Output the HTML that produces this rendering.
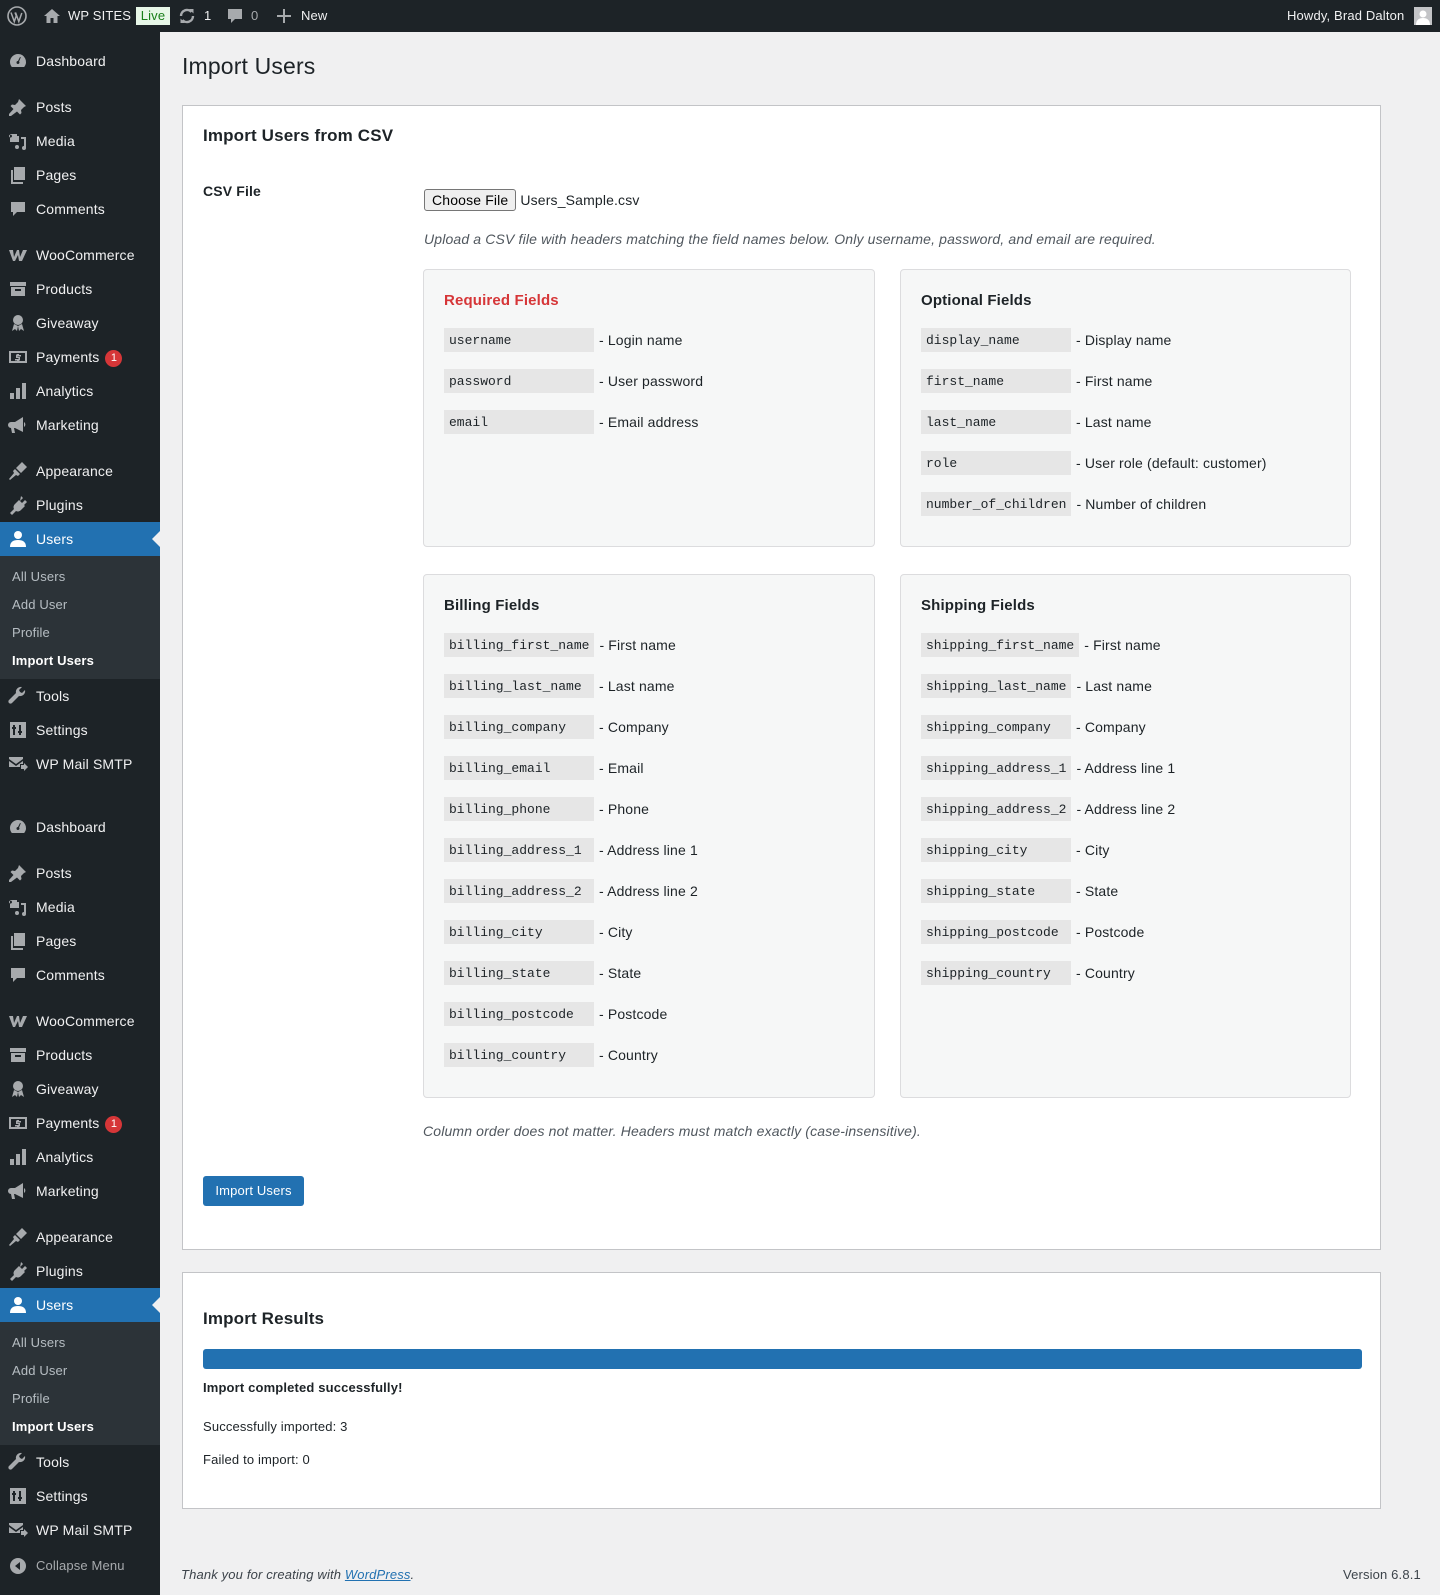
<!DOCTYPE html>
<html><head><meta charset="utf-8">
<style>
*{box-sizing:border-box;margin:0;padding:0}
body{width:1440px;height:1595px;background:#f0f0f1;font-family:"Liberation Sans",sans-serif;color:#1d2327;position:relative;overflow:hidden;font-size:14px;letter-spacing:.15px}
.ab{position:absolute;left:0;top:0;width:1440px;height:32px;background:#1d2327;color:#f0f0f1;font-size:13px}
.ab span,.ab svg{position:absolute}
.side{position:absolute;left:0;top:32px;width:160px;height:1563px;background:#1d2327}
.m{position:absolute;left:0;width:160px;height:34px;color:#f0f0f1;font-size:14px;line-height:34px;padding-left:36px}
.m svg{position:absolute;left:8px;top:7px;width:20px;height:20px;fill:#a7aaad}
.m.cur{background:#2271b1;color:#fff}
.m.cur svg{fill:#fff}
.m.cur:after{content:"";position:absolute;right:0;top:9px;border:8px solid transparent;border-right-color:#f0f0f1}
.sub{position:absolute;left:0;width:160px;height:123px;background:#2c3338;padding-top:7px}
.sub div{height:28px;line-height:28px;padding-left:12px;font-size:13px;color:rgba(240,246,252,.7)}
.sub div.b{color:#fff;font-weight:bold}
.badge{display:inline-block;width:17px;height:17px;border-radius:9px;background:#d63638;color:#fff;font-size:11px;line-height:17px;text-align:center;vertical-align:1px;margin-left:6px;letter-spacing:0}
.box{position:absolute;left:182px;width:1199px;background:#fff;border:1px solid #c3c4c7}
.panel{position:absolute;background:#f6f7f7;border:1px solid #dcdcde;border-radius:4px;padding:20px 20px}
.panel h3{font-size:15px;font-weight:bold;height:22px;line-height:22px;margin-top:0px;margin-bottom:16px;color:#1d2327}
.row{height:24px;margin-bottom:17px;line-height:24px;font-size:14px;color:#1d2327;white-space:nowrap}
.row code{display:inline-block;min-width:150px;height:24px;line-height:25px;padding:0 5px;background:#e6e6e6;font-family:"Liberation Mono",monospace;font-size:13px;color:#1d2327;vertical-align:top;margin-right:5px;letter-spacing:0}
.abs{position:absolute;white-space:nowrap}
</style></head><body>
<div class="ab">
<svg style="left:7px;top:6px" width="20" height="20" viewBox="0 0 20 20"><circle cx="10" cy="10" r="9" fill="none" stroke="#a7aaad" stroke-width="1.6"/><path d="M4 6.5l3.3 9 2-5.7-1.3-3.3M8.5 6.5l3.3 9 3-8.5" fill="none" stroke="#a7aaad" stroke-width="1.5"/></svg>
<svg style="left:43px;top:7px" width="18" height="18" viewBox="0 0 18 18"><path d="M9 2L1 9h2.5v7h4v-5h3v5h4V9H17z" fill="#a7aaad"/></svg>
<span style="left:68px;top:8px">WP SITES</span>
<span style="left:136px;top:7px;width:34px;height:18px;background:#e7f6e7;color:#1a7f1a;font-size:13px;line-height:18px;text-align:center">Live</span>
<svg style="left:178px;top:7px" width="18" height="18" viewBox="0 0 18 18"><path d="M3 9a6 6 0 0 1 10.5-4M15 9a6 6 0 0 1-10.5 4" fill="none" stroke="#a7aaad" stroke-width="2.4"/><path d="M11 2h4.5v4.5zM7 16H2.5v-4.5z" fill="#a7aaad"/></svg>
<span style="left:204px;top:8px">1</span>
<svg style="left:227px;top:8px" width="16" height="16" viewBox="0 0 16 16"><path d="M1 1h14v10H8l-4 4v-4H1z" fill="#a7aaad"/></svg>
<span style="left:251px;top:8px;color:#a7aaad">0</span>
<svg style="left:277px;top:9px" width="14" height="14" viewBox="0 0 14 14"><path d="M6 0h2v14H6zM0 6h14v2H0z" fill="#a7aaad"/></svg>
<span style="left:301px;top:8px">New</span>
<span style="left:1287px;top:8px">Howdy, Brad Dalton</span>
<svg style="left:1414px;top:7px" width="18" height="18" viewBox="0 0 18 18"><rect width="18" height="18" fill="#c3c4c7"/><circle cx="9" cy="7" r="3.5" fill="#fff"/><path d="M2 18c0-5 3-7 7-7s7 2 7 7z" fill="#fff"/></svg>
</div>

<div class="side">
<div id="blk"></div>
</div>
<script>
(function(){
var I={
dash:'<path d="M10 3a8 8 0 0 0-8 8c0 2 .7 3.6 1.8 5h12.4A8 8 0 0 0 10 3zm0 10a1.5 1.5 0 1 1 0-3l2-4 .8.3-1.7 4.2A1.5 1.5 0 0 1 10 13z"/>',
posts:'<path d="M11 2l7 7-2 1-3 3 .5 3-1.5 1.5-3-3L3 19H1v-2l4.5-5-3-3L4 7.5 7 8l3-3z"/>',
media:'<path d="M2 3h7v2h2v6H2zM4 5a1.5 1.5 0 1 0 0 .1zM13 6h5v11a2 2 0 1 1-2-2V8h-3z"/><circle cx="9" cy="16" r="2"/>',
pages:'<path d="M6 2h11v13H6zM3 5h2v12h10v2H3z"/>',
comm:'<path d="M3 3h14v10H9l-4 4v-4H3z"/>',
woo:'<path d="M1 5h4l1 7 3-7h2l1 7 3-7h4l-5 11h-3l-1-6-3 6H5z"/>',
prod:'<path d="M2 3h16v4H2zM3 8h14v9H3zm4 2v2h6v-2z"/>',
give:'<circle cx="10" cy="7" r="5"/><path d="M6 11l-2 7 3-2 2 2 1-5zM14 11l2 7-3-2-2 2-1-5z"/>',
pay:'<path d="M1 4h18v12H1zm2 2v8h14V6zm6 1h2v1h2v1.5H9.5v.5H12v3.5h-1v1H9v-1H7v-1.5h3.5V11H8V7.5h1z"/>',
anal:'<path d="M2 12h4v6H2zM8 7h4v11H8zM14 2h4v16h-4z"/>',
mark:'<path d="M3 7h4l8-5v15l-8-4H6l1 5H4l-1-5a3 3 0 0 1 0-6zM16 7a3 3 0 0 1 0 5z"/>',
app:'<path d="M14 1l5 5-6 6-5-5zM7 8l5 5-2 2-2-1-6 5-1-1 5-6-1-2z"/>',
plug:'<path d="M13 1l2 2-3 3 2 2 3-3 2 2-3 3 1 1-4 4a4 4 0 0 1-5 1l-4 4-2-2 4-4a4 4 0 0 1 1-5l4-4 1 1z"/>',
user:'<circle cx="10" cy="6" r="4"/><path d="M2 18c0-5 3-7 8-7s8 2 8 7z"/>',
tools:'<path d="M17 4l-3 3-2-1-1-2 3-3a5 5 0 0 0-6 6L1 14a2 2 0 0 0 3 3l7-7a5 5 0 0 0 6-6z"/>',
set:'<path d="M2 2h16v16H2zm3 3v2H4v2h1v6h2V9h1V7H7V5zm6 0v6h-1v2h1v2h2v-2h1v-2h-1V5z"/>',
mail:'<path d="M1 3h14v2l-7 5-7-5zM1 7l7 5 7-5v3h-3v3H1zM13 11h3v-2l4 4-4 4v-2h-3z"/>'
};
function m(top,ic,txt,cls,extra){return '<div class="m '+(cls||'')+'" style="top:'+top+'px"><svg viewBox="0 0 20 20">'+I[ic]+'</svg>'+txt+(extra||'')+'</div>';}
var h='';
function block(o){
 var y=o+12;
 h+=m(y,'dash','Dashboard');y+=34+12;
 [['posts','Posts'],['media','Media'],['pages','Pages'],['comm','Comments']].forEach(function(a){h+=m(y,a[0],a[1]);y+=34});
 y+=12;
 [['woo','WooCommerce'],['prod','Products'],['give','Giveaway'],['pay','Payments','<span class="badge">1</span>'],['anal','Analytics'],['mark','Marketing']].forEach(function(a){h+=m(y,a[0],a[1],'',a[2]);y+=34});
 y+=12;
 h+=m(y,'app','Appearance');y+=34;h+=m(y,'plug','Plugins');y+=34;
 h+=m(y,'user','Users','cur');y+=34;
 h+='<div class="sub" style="top:'+y+'px"><div>All Users</div><div>Add User</div><div>Profile</div><div class="b">Import Users</div></div>';y+=123;
 h+=m(y,'tools','Tools');y+=34;h+=m(y,'set','Settings');y+=34;h+=m(y,'mail','WP Mail SMTP');y+=34;
 return y;
}
var e=block(0);
e=block(766);
h+='<div class="m" style="top:'+(e+2)+'px;color:#a7aaad;font-size:13px"><svg viewBox="0 0 20 20"><circle cx="10" cy="10" r="8"/><path d="M12 6v8l-5-4z" fill="#1d2327"/></svg>Collapse Menu</div>';
document.getElementById('blk').outerHTML=h;
})();
</script>

<div class="abs" style="left:182px;top:52px;font-size:23px;line-height:29px;color:#1d2327">Import Users</div>

<div class="box" style="top:105px;height:1145px">
<div class="abs" style="left:20px;top:19px;font-size:17px;font-weight:bold;line-height:22px">Import Users from CSV</div>
<div class="abs" style="left:20px;top:76px;font-size:14px;font-weight:bold;line-height:18px">CSV File</div>
<div class="abs" style="left:241px;top:83px;height:22px;line-height:20px;font-size:14px"><span style="display:inline-block;border:1px solid #767676;border-radius:3px;background:#efefef;padding:0 7px;height:22px;line-height:20px;color:#000">Choose File</span> Users_Sample.csv</div>
<div class="abs" style="left:241px;top:123px;font-size:14px;font-style:italic;color:#50575e;line-height:20px">Upload a CSV file with headers matching the field names below. Only username, password, and email are required.</div>
</div>

<div class="panel" style="left:423px;top:269px;width:452px;height:278px">
<h3 style="color:#d63638">Required Fields</h3>
<div class="row"><code>username</code>- Login name</div>
<div class="row"><code>password</code>- User password</div>
<div class="row"><code>email</code>- Email address</div>
</div>
<div class="panel" style="left:900px;top:269px;width:451px;height:278px">
<h3>Optional Fields</h3>
<div class="row"><code>display_name</code>- Display name</div>
<div class="row"><code>first_name</code>- First name</div>
<div class="row"><code>last_name</code>- Last name</div>
<div class="row"><code>role</code>- User role (default: customer)</div>
<div class="row"><code>number_of_children</code>- Number of children</div>
</div>
<div class="panel" style="left:423px;top:574px;width:452px;height:524px">
<h3>Billing Fields</h3>
<div class="row"><code>billing_first_name</code>- First name</div>
<div class="row"><code>billing_last_name</code>- Last name</div>
<div class="row"><code>billing_company</code>- Company</div>
<div class="row"><code>billing_email</code>- Email</div>
<div class="row"><code>billing_phone</code>- Phone</div>
<div class="row"><code>billing_address_1</code>- Address line 1</div>
<div class="row"><code>billing_address_2</code>- Address line 2</div>
<div class="row"><code>billing_city</code>- City</div>
<div class="row"><code>billing_state</code>- State</div>
<div class="row"><code>billing_postcode</code>- Postcode</div>
<div class="row"><code>billing_country</code>- Country</div>
</div>
<div class="panel" style="left:900px;top:574px;width:451px;height:524px">
<h3>Shipping Fields</h3>
<div class="row"><code>shipping_first_name</code>- First name</div>
<div class="row"><code>shipping_last_name</code>- Last name</div>
<div class="row"><code>shipping_company</code>- Company</div>
<div class="row"><code>shipping_address_1</code>- Address line 1</div>
<div class="row"><code>shipping_address_2</code>- Address line 2</div>
<div class="row"><code>shipping_city</code>- City</div>
<div class="row"><code>shipping_state</code>- State</div>
<div class="row"><code>shipping_postcode</code>- Postcode</div>
<div class="row"><code>shipping_country</code>- Country</div>
</div>

<div class="abs" style="left:423px;top:1121px;font-size:14px;font-style:italic;color:#50575e;line-height:20px">Column order does not matter. Headers must match exactly (case-insensitive).</div>
<div class="abs" style="left:203px;top:1176px;width:101px;height:30px;background:#2271b1;border-radius:3px;color:#fff;font-size:13px;line-height:30px;text-align:center">Import Users</div>

<div class="box" style="top:1272px;height:237px">
<div class="abs" style="left:20px;top:35px;font-size:17px;font-weight:bold;line-height:22px">Import Results</div>
<div class="abs" style="left:20px;top:76px;width:1159px;height:20px;background:#2271b1;border-radius:3px"></div>
<div class="abs" style="left:20px;top:106px;font-size:13px;font-weight:bold;line-height:18px">Import completed successfully!</div>
<div class="abs" style="left:20px;top:145px;font-size:13px;line-height:18px">Successfully imported: 3</div>
<div class="abs" style="left:20px;top:178px;font-size:13px;line-height:18px">Failed to import: 0</div>
</div>

<div class="abs" style="left:181px;top:1566px;font-size:13px;font-style:italic;color:#3c434a;line-height:18px">Thank you for creating with <span style="color:#2271b1;text-decoration:underline">WordPress</span>.</div>
<div class="abs" style="left:1343px;top:1566px;font-size:13px;color:#3c434a;line-height:18px">Version 6.8.1</div>
</body></html>
